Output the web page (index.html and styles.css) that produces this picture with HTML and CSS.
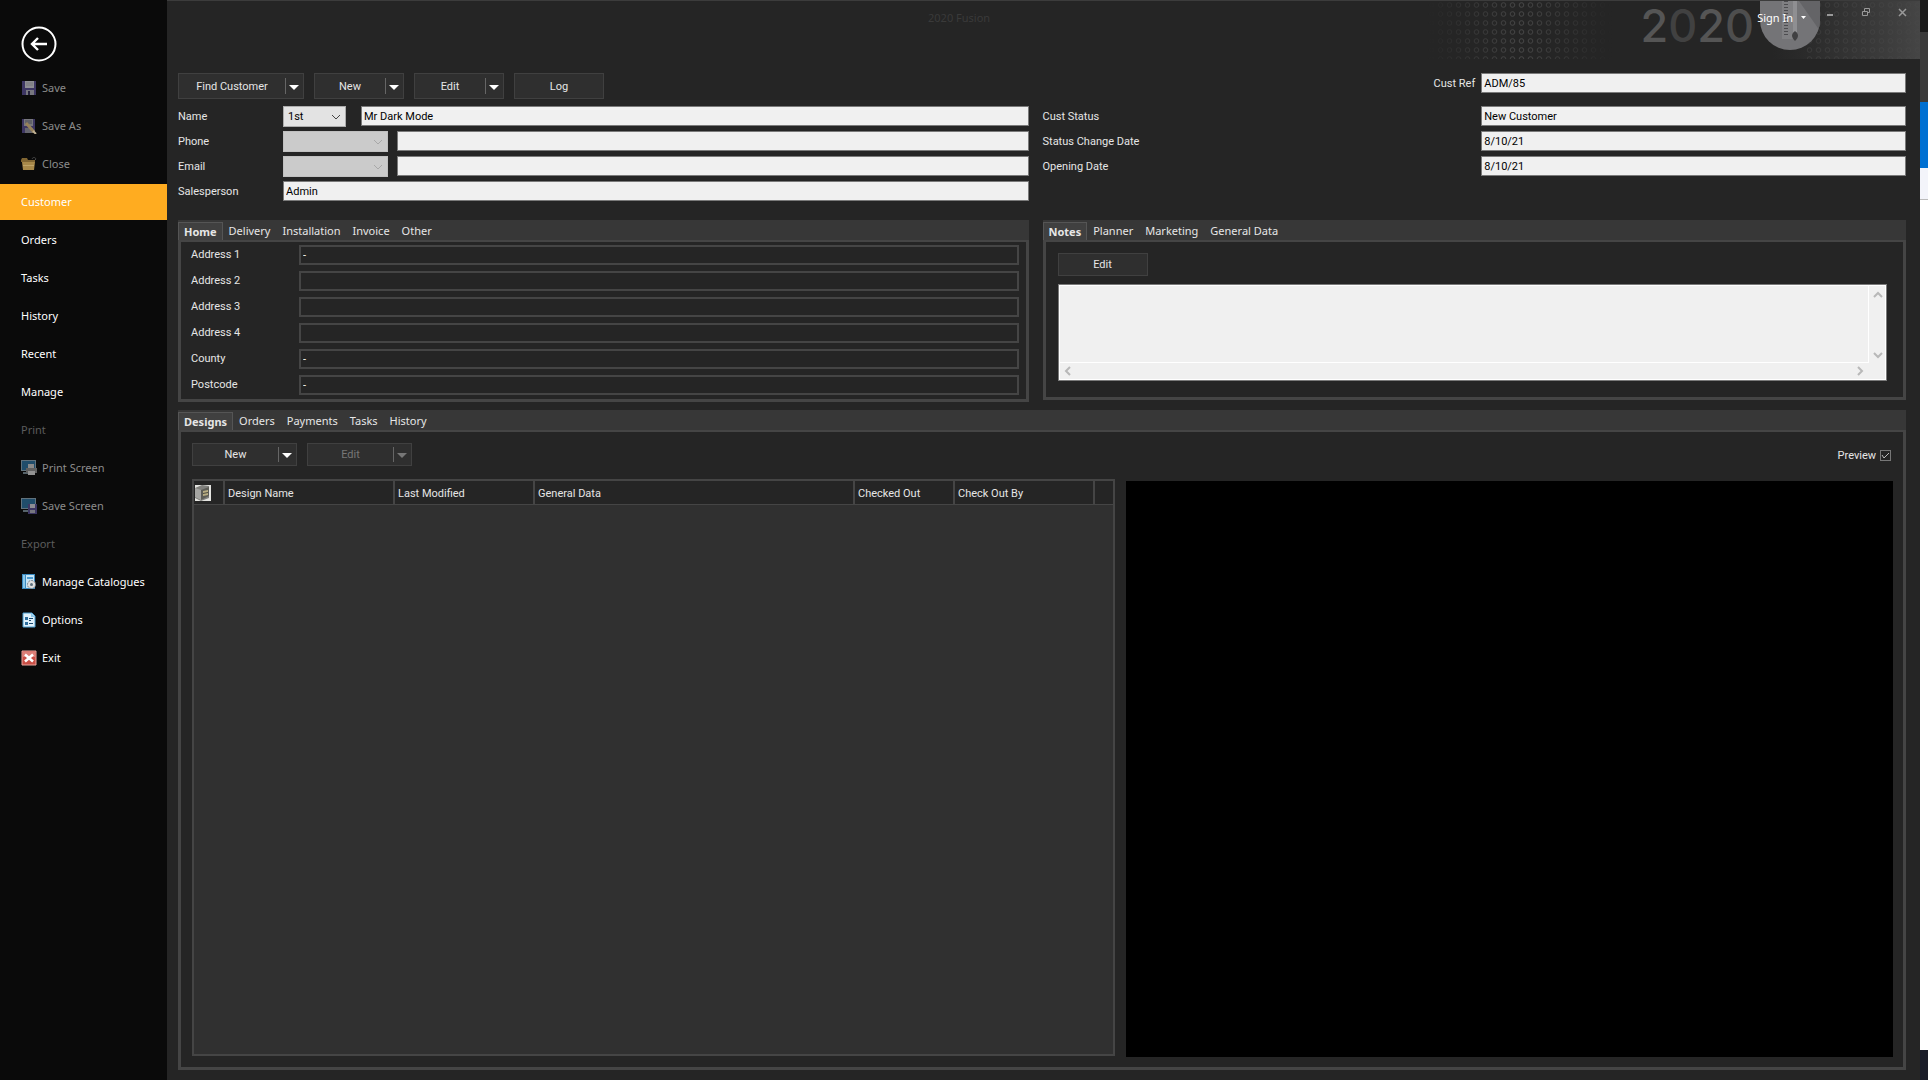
FILE: index.html
```html
<!DOCTYPE html>
<html lang="en">
<head>
  <meta charset="utf-8">
  <title>2020 Fusion</title>
  <link rel="stylesheet" href="styles.css">
</head>
<body>

<div id="window">

  <nav id="sidebar">
    <button class="back" aria-label="Back">
      <svg width="36" height="36" viewBox="0 0 36 36" fill="none" stroke="#fff" stroke-width="2">
        <circle cx="18" cy="18" r="16.5"/>
        <path d="M26 18H11M17 12l-6 6 6 6" stroke-width="2.4"/>
      </svg>
    </button>
    <ul class="menu">
      <li><a href="#" class="disabled">
        <svg class="icon" viewBox="0 0 16 16"><path d="M1 1h14v14H1z" fill="#3d3663"/><path d="M4 1h9v7H4z" fill="#8d8d93"/><path d="M5 3h7M5 5h7" stroke="#77777d"/><path d="M5 10h8v5H5z" fill="#77777f"/><path d="M7 11h2v4H7z" fill="#26223d"/></svg>
        Save</a></li>
      <li><a href="#" class="disabled">
        <svg class="icon" viewBox="0 0 16 16"><path d="M1 1h13v14H1z" fill="#3d3663"/><path d="M3 1h9v7H3z" fill="#77777d"/><path d="M4 3h7M4 5h7" stroke="#4c4c55"/><path d="M4 10h8v5H4z" fill="#66666f"/><path d="M5 5l8 9" stroke="#96815a" stroke-width="3"/><path d="M12 13l3 3" stroke="#c0b090" stroke-width="2"/></svg>
        Save As</a></li>
      <li><a href="#" class="disabled">
        <svg class="icon" viewBox="0 0 16 16"><path d="M0 4l1-2h5l1 2h7v2H0z" fill="#806532"/><path d="M1 6h13l-1 8H2z" fill="#a8894a"/><path d="M2 9h11v1H2z" fill="#c0a468"/><path d="M11 3c1-2 3-2 4 0l-1 1" stroke="#4a4a4a" fill="none"/></svg>
        Close</a></li>
      <li><a href="#" class="active">Customer</a></li>
      <li><a href="#">Orders</a></li>
      <li><a href="#">Tasks</a></li>
      <li><a href="#">History</a></li>
      <li><a href="#">Recent</a></li>
      <li><a href="#">Manage</a></li>
      <li><span class="heading">Print</span></li>
      <li><a href="#" class="disabled">
        <svg class="icon" viewBox="0 0 16 16"><path d="M0 0h15v11H0z" fill="#61727d"/><path d="M1 1h13v9H1z" fill="#204d6b"/><path d="M2 12h5v2H2z" fill="#56636a"/><path d="M7 4h6v4H7z" fill="#8a8a8a"/><path d="M5 8h11v5H5z" fill="#606060"/><path d="M7 11h7v4H7z" fill="#929292"/></svg>
        Print Screen</a></li>
      <li><a href="#" class="disabled">
        <svg class="icon" viewBox="0 0 16 16"><path d="M0 0h15v11H0z" fill="#61727d"/><path d="M1 1h13v9H1z" fill="#204d6b"/><path d="M2 12h5v2H2z" fill="#56636a"/><path d="M7 6h9v10H7z" fill="#3d3663"/><path d="M9 6h5v4H9z" fill="#8d8d93"/><path d="M9 12h5v3H9z" fill="#77777f"/></svg>
        Save Screen</a></li>
      <li><span class="heading">Export</span></li>
      <li><a href="#">
        <svg class="icon" viewBox="0 0 16 16"><path d="M1 0h13v15H1z" fill="#3a8ac0"/><path d="M2 1h2v13H2z" fill="#8cc8ea"/><path d="M5 1h8v13H5z" fill="#c6e4f5"/><path d="M6 3h6v2H6z" fill="#4c9bd0"/><circle cx="10.5" cy="10.5" r="4" fill="#dedede" stroke="#707a82" stroke-dasharray="2 1"/><circle cx="10.5" cy="10.5" r="1.5" fill="#5c6f7c"/></svg>
        Manage Catalogues</a></li>
      <li><a href="#">
        <svg class="icon" viewBox="0 0 16 16"><path d="M2 1h9l3 3v11H2z" fill="#dff1fb" stroke="#4c9fd2"/><path d="M10 1v4h4" fill="#8cc8ea"/><path d="M4 5h3v3H4zM4 10h3v3H4z" fill="#2c6d9d"/><path d="M8 6.5h4M8 8.500h2M8 11.500h4" stroke="#17486e"/></svg>
        Options</a></li>
      <li><a href="#">
        <svg class="icon" viewBox="0 0 16 16"><path d="M1 1h14v14H1z" fill="#c94f46" stroke="#e9a59d"/><path d="M2 2h12v5H2z" fill="#dc8078"/><path d="M4 4.5l8 7M12 4.5l-8 7" stroke="#fff" stroke-width="2.6"/></svg>
        Exit</a></li>
    </ul>
  </nav>

  <div id="main">

    <div id="titlebar">
      <svg class="art" width="493" height="58" viewBox="0 0 493 58">
        <defs>
          <pattern id="rings" width="9" height="9" patternUnits="userSpaceOnUse"><circle cx="4.5" cy="4" r="2.3" fill="none" stroke="#484848"/></pattern>
          <linearGradient id="fadeLeft"><stop offset="0" stop-color="#fff" stop-opacity="0"/><stop offset=".5" stop-color="#fff"/><stop offset="1" stop-color="#fff" stop-opacity="0"/></linearGradient>
          <linearGradient id="shine"><stop offset="0" stop-color="#3c3c3c" stop-opacity="0"/><stop offset="1" stop-color="#454545"/></linearGradient>
          <mask id="m1"><path d="M0 0h185v58H0z" fill="url(#fadeLeft)"/></mask>
          <clipPath id="disc"><path d="M333 0h60v19a30 30 0 0 1-60 0z"/></clipPath>
        </defs>
        <path d="M345 0h148v58H345z" fill="url(#shine)"/>
        <path d="M0 0h185v58H0z" fill="url(#rings)" mask="url(#m1)"/>
        <path d="M380 0h113v58H380z" fill="url(#rings)" opacity=".5"/>
        <g clip-path="url(#disc)">
          <path d="M333 0h60v50h-60z" fill="#747477"/>
          <path d="M372 0h21v30z" fill="#646467"/>
          <path d="M355 0h14v38h-14z" fill="#808083"/>
          <path d="M359 0v34" stroke="#4d4d50" stroke-width="4" stroke-dasharray="1 2"/>
          <path d="M366 0h4v31h-4z" fill="#8f8f92"/>
          <path d="M368 40c-4-4-4-7 0-10 4 3 4 6 0 10z" fill="#404042"/>
        </g>
      </svg>
      <div class="logo"><span class="c1">2</span><span class="c2">0</span><span class="c1">2</span><span class="c3">0</span></div>
      <div class="title">2020 Fusion</div>
      <button class="signin">Sign In <svg width="6" height="4" viewBox="0 0 6 4"><path d="M0 0h5L2.5 3z" fill="#fff"/></svg></button>
      <div class="controls">
        <button aria-label="Minimize"><svg width="12" height="12" viewBox="0 0 12 12" stroke="#999" fill="none"><path d="M3 8h6" stroke-width="2"/></svg></button>
        <button aria-label="Restore"><svg width="12" height="12" viewBox="0 0 12 12" stroke="#999" fill="none"><path d="M2.5 4.500h5v4h-5zM4.500 4V1.500h5v4H8"/></svg></button>
        <button aria-label="Close"><svg width="12" height="12" viewBox="0 0 12 12" stroke="#999" fill="none"><path d="M3 2l7 7M10 2l-7 7" stroke-width="1.5"/></svg></button>
      </div>
    </div>

    <div id="customer">
      <div class="toolbar">
        <div class="split wide"><button>Find Customer</button><button class="drop" aria-label="Find Customer options"></button></div>
        <div class="split"><button>New</button><button class="drop" aria-label="New options"></button></div>
        <div class="split"><button>Edit</button><button class="drop" aria-label="Edit options"></button></div>
        <button class="plain">Log</button>
      </div>

      <div class="status-form">
        <label class="right" for="cust-ref">Cust Ref</label>
        <input type="text" id="cust-ref" value="ADM/85">
      </div>

      <div class="contact-form">
        <label for="name">Name</label>
        <div class="fields">
          <select class="title-select" aria-label="Name order"><option>1st</option></select>
          <input type="text" id="name" value="Mr Dark Mode">
        </div>
        <label for="phone">Phone</label>
        <div class="fields">
          <select aria-label="Phone type" disabled><option></option></select>
          <input type="text" id="phone">
        </div>
        <label for="email">Email</label>
        <div class="fields">
          <select aria-label="Email type" disabled><option></option></select>
          <input type="text" id="email">
        </div>
        <label for="salesperson">Salesperson</label>
        <div class="fields"><input type="text" id="salesperson" value="Admin"></div>
      </div>

      <div class="status-form">
        <label for="status">Cust Status</label>
        <input type="text" id="status" value="New Customer">
        <label for="status-date">Status Change Date</label>
        <input type="text" id="status-date" value="8/10/21">
        <label for="open-date">Opening Date</label>
        <input type="text" id="open-date" value="8/10/21">
      </div>

      <div class="panel">
        <div class="tabs">
          <button class="selected">Home</button><button>Delivery</button><button>Installation</button><button>Invoice</button><button>Other</button>
        </div>
        <div class="panel-body address">
          <label for="address1">Address 1</label><input type="text" id="address1" value="-">
          <label for="address2">Address 2</label><input type="text" id="address2">
          <label for="address3">Address 3</label><input type="text" id="address3">
          <label for="address4">Address 4</label><input type="text" id="address4">
          <label for="county">County</label><input type="text" id="county" value="-">
          <label for="postcode">Postcode</label><input type="text" id="postcode" value="-">
        </div>
      </div>

      <div class="panel">
        <div class="tabs">
          <button class="selected">Notes</button><button>Planner</button><button>Marketing</button><button>General Data</button>
        </div>
        <div class="panel-body notes">
          <button class="plain">Edit</button>
          <div class="notes-box">
            <textarea aria-label="Notes"></textarea>
            <div class="vscroll">
              <svg width="10" height="8" viewBox="0 0 10 8"><path d="M1 6l4-4 4 4"/></svg>
              <svg width="10" height="8" viewBox="0 0 10 8"><path d="M1 2l4 4 4-4"/></svg>
            </div>
            <div class="hscroll">
              <svg width="8" height="10" viewBox="0 0 8 10"><path d="M6 1L2 5l4 4"/></svg>
              <svg width="8" height="10" viewBox="0 0 8 10"><path d="M2 1l4 4-4 4"/></svg>
            </div>
          </div>
        </div>
      </div>
    </div>

    <div id="designs" class="panel">
      <div class="tabs">
        <button class="selected">Designs</button><button>Orders</button><button>Payments</button><button>Tasks</button><button>History</button>
      </div>
      <div class="panel-body">
        <div class="design-bar">
          <div class="split"><button>New</button><button class="drop" aria-label="New options"></button></div>
          <div class="split"><button disabled>Edit</button><button class="drop" aria-label="Edit options" disabled></button></div>
          <label class="preview-toggle">Preview <input type="checkbox" checked></label>
        </div>
        <div class="design-area">
          <div class="list">
            <table>
              <colgroup><col class="c-icon"><col class="c-name"><col class="c-date"><col><col class="c-out"><col class="c-by"><col class="c-end"></colgroup>
              <thead>
                <tr>
                  <th><svg width="16" height="16" viewBox="0 0 16 16"><path d="M0 0h16v16H0z" fill="#e4e4e0"/><path d="M0 3l7-3 7 1v12l-8 3-6-3z" fill="#80807d"/><path d="M0 3l6 2v10l-6-3z" fill="#a5a5a2"/><path d="M6 5l8-3v9l-8 4z" fill="#5c5c56"/><path d="M8 6l5-1v5l-5 1z" fill="#b8ad82"/><path d="M8 8.5l5-1" stroke="#4c4b40"/></svg></th>
                  <th>Design Name</th>
                  <th>Last Modified</th>
                  <th>General Data</th>
                  <th>Checked Out</th>
                  <th>Check Out By</th>
                  <th></th>
                </tr>
              </thead>
            </table>
          </div>
          <div class="preview"></div>
        </div>
      </div>
    </div>

  </div>
</div>

<div id="desktop">
  <div class="bar-dark"></div>
  <div class="bar-grey"></div>
  <div class="bar-blue"></div>
  <div class="bar-pale"></div>
  <div class="bar-white"></div>
  <div class="taskbar"></div>
</div>

</body>
</html>
```
FILE: styles.css
```css
* {
  box-sizing: border-box;
}
body {
  margin: 0;
  height: 100vh;
  display: flex;
  background: #252525;
  color: #e6e6e6;
  font-family: Roboto, "Liberation Sans", sans-serif;
  font-size: 11px;
  line-height: 14px;
}
button, input, select, textarea {
  margin: 0;
  font: inherit;
  color: inherit;
  border-radius: 0;
}
button {
  background: none;
  border: 0;
  padding: 0;
}
#window {
  flex: 1;
  min-width: 0;
  display: flex;
}

/* sidebar */
#sidebar {
  width: 167px;
  flex: none;
  background: #0a0a0a;
  padding-top: 26px;
}
.back {
  display: block;
  margin-left: 21px;
  height: 36px;
}
.back svg {
  display: block;
}
.menu {
  list-style: none;
  margin: 8px 0 0;
  padding: 0;
  font-family: "Noto Sans", sans-serif;
}
.menu li {
  margin-bottom: 2px;
}
.menu a, .menu .heading {
  display: flex;
  align-items: center;
  gap: 5px;
  height: 36px;
  padding-left: 21px;
  color: #fff;
  text-decoration: none;
}
.menu .disabled {
  color: #8c8c8c;
}
.menu .heading {
  color: #5c5c5c;
}
.menu .active {
  background: #ffac20;
}
.icon {
  width: 16px;
  height: 16px;
}

/* title bar */
#main {
  flex: 1;
  min-width: 0;
  display: flex;
  flex-direction: column;
  padding: 0 14px 10px 11px;
}
#titlebar {
  position: relative;
  display: flex;
  height: 59px;
  margin: 0 -14px 14px -11px;
  border-top: 1px solid #3c3c3c;
  font-family: "Noto Sans", sans-serif;
}
.art {
  position: absolute;
  top: 0;
  right: 0;
}
.logo {
  position: absolute;
  top: 0;
  right: 166px;
  font: 500 45px/50px Inter, sans-serif;
}
.c1 { color: #555; }
.c2 { color: #414141; }
.c3 { color: #4e4e4e; }
.title {
  flex: 1;
  padding: 10px 6px 0 0;
  text-align: center;
  color: #3a3a3a;
}
.signin, .controls {
  position: relative;
}
.signin {
  display: flex;
  align-items: center;
  gap: 8px;
  height: 34px;
  margin-right: 17px;
  color: #fff;
}
.controls {
  display: flex;
  gap: 24px;
  height: 24px;
  margin-right: 12px;
}
.controls svg {
  display: block;
}

/* customer */
#customer {
  display: grid;
  grid-template-columns: 851fr 864fr;
  column-gap: 14px;
  align-items: start;
}
.toolbar, .design-bar {
  display: flex;
  gap: 10px;
}
.split {
  display: flex;
  width: 90px;
  height: 26px;
  background: #2f2f2f;
  border: 1px solid #404040;
}
.split.wide {
  width: 126px;
}
.split button:first-child {
  flex: 1;
  padding-top: 1px;
}
.split .drop {
  width: 18px;
  margin: 4px 0;
  border-left: 1px solid #666;
}
.drop::before {
  content: "";
  display: block;
  margin: 2px 0 0 3px;
  width: 0;
  border: 5px solid transparent;
  border-top-color: #fff;
  border-bottom: 0;
}
.split button:disabled {
  color: #777;
}
.drop:disabled::before {
  border-top-color: #777;
}
.plain {
  width: 90px;
  height: 26px;
  padding-top: 1px;
  background: #2f2f2f;
  border: 1px solid #404040;
}

.contact-form, .status-form {
  display: grid;
  align-items: center;
}
.contact-form {
  grid-template-columns: 105px 1fr;
  row-gap: 4px;
  margin: 7px 0 18px;
}
.status-form {
  grid-template-columns: 439fr 425fr;
  row-gap: 5px;
}
.contact-form + .status-form {
  margin-top: 7px;
}
.status-form .right {
  text-align: right;
  padding-right: 6px;
}
.contact-form label, .status-form label {
  padding-top: 1px;
}
.fields {
  display: flex;
  gap: 9px;
  height: 21px;
}
input[type=text] {
  width: 100%;
  min-width: 0;
  height: 20px;
  padding: 0 2px;
  background: #f0f0f0;
  border: 1px solid #7a7a7a;
  color: #000;
}
select {
  flex: none;
  width: 105px;
  height: 21px;
  padding: 0 4px;
  appearance: none;
  color: #000;
  background: #e3e3e3 url("data:image/svg+xml,%3Csvg xmlns='http://www.w3.org/2000/svg' width='10' height='6' fill='none' stroke='%23444'%3E%3Cpath d='M1 1l4 4 4-4'/%3E%3C/svg%3E") no-repeat right 4px center;
  border: 1px solid #acacac;
}
select:disabled {
  opacity: 1;
  background-color: #cbcbcb;
  background-image: url("data:image/svg+xml,%3Csvg xmlns='http://www.w3.org/2000/svg' width='10' height='6' fill='none' stroke='%23a8a8a8'%3E%3Cpath d='M1 1l4 4 4-4'/%3E%3C/svg%3E");
  border-color: #c0c0c0;
}
.title-select {
  width: 63px;
  margin-right: 6px;
}

/* tabbed panels */
.panel {
  background: #252525;
}
.tabs {
  display: flex;
  height: 22px;
  background: #373737;
  border-bottom: 2px solid #454545;
  font-family: "Noto Sans", sans-serif;
}
.tabs button {
  padding: 2px 6px 0;
  height: 20px;
}
.tabs .selected {
  height: 18px;
  margin-top: 2px;
  padding: 0 5px;
  background: #404040;
  border: 1px solid #555;
  border-bottom: 0;
  font-weight: bold;
}
.panel-body {
  border: 3px solid #454545;
  border-top: 0;
}
.address {
  display: grid;
  grid-template-columns: 108px 1fr;
  gap: 6px 0;
  align-items: center;
  padding: 3px 7px 4px 10px;
}
.address input[type=text] {
  background: #252525;
  border: 2px solid #454545;
  color: #fff;
}
.notes {
  padding: 11px 16px 16px 12px;
}
.notes .plain {
  display: block;
  height: 23px;
  margin-bottom: 8px;
}
.notes-box {
  display: grid;
  grid-template-columns: 1fr 17px;
  grid-template-rows: 1fr 17px;
  height: 97px;
  background: #f0f0f0;
  border: 1px solid #7a7a7a;
  outline: 1px solid #fff;
  outline-offset: -2px;
}
.notes-box textarea {
  background: none;
  border: 1px solid #fff;
  resize: none;
  overflow: hidden;
  color: #000;
}
.vscroll, .hscroll {
  display: flex;
  justify-content: space-between;
  align-items: center;
  fill: none;
  stroke: #b8b8b8;
  stroke-width: 2;
}
.vscroll {
  flex-direction: column;
  padding: 6px 0 4px;
}
.hscroll {
  padding: 0 5px 2px;
}

/* designs */
#designs {
  flex: 1;
  display: flex;
  flex-direction: column;
  margin-top: 8px;
}
#designs .panel-body {
  flex: 1;
  display: flex;
  flex-direction: column;
  padding: 11px 10px 11px 11px;
}
.design-bar .split {
  width: 105px;
  height: 23px;
}
.design-bar .drop {
  margin: 3px 0;
}
.preview-toggle {
  display: flex;
  align-items: center;
  gap: 4px;
  margin-left: auto;
  padding: 2px 2px 0 0;
}
.preview-toggle input {
  appearance: none;
  width: 11px;
  height: 11px;
  margin: 0;
  border: 1px solid #777;
  background: url("data:image/svg+xml,%3Csvg xmlns='http://www.w3.org/2000/svg' width='9' height='9' fill='none' stroke='%23bbb'%3E%3Cpath d='M1 4l2 3 5-5'/%3E%3C/svg%3E") no-repeat center;
}
.design-area {
  flex: 1;
  display: grid;
  grid-template-columns: 923fr 767fr;
  column-gap: 11px;
  margin-top: 13px;
}
.list {
  background: #303030;
  border: 2px solid #454545;
}
.list table {
  width: 100%;
  table-layout: fixed;
  border-collapse: separate;
  border-spacing: 0;
}
.list th {
  height: 24px;
  padding: 2px 3px 0;
  background: #252525;
  border-right: 2px solid #454545;
  border-bottom: 1px solid #454545;
  font-weight: normal;
  text-align: left;
}
.list th:first-child {
  padding: 1px 1px 0;
}
.list th:last-child {
  border-right: 0;
}
.list th svg {
  display: block;
}
.c-icon { width: 31px; }
.c-name { width: 170px; }
.c-date { width: 140px; }
.c-out { width: 100px; }
.c-by { width: 140px; }
.c-end { width: 18px; }
.preview {
  background: #000;
  margin: 2px 0 -1px;
}

/* sliver of the desktop behind the window */
#desktop {
  width: 8px;
  display: flex;
  flex-direction: column;
}
.bar-dark { height: 32px; background: #1b1b1b; }
.bar-grey { height: 70px; background: #3b3b3b; }
.bar-blue { height: 66px; background: #0070d2; }
.bar-pale { height: 32px; background: #f3f4fa; border-bottom: 1px solid #bbb; }
.bar-white { flex: 1; background: #fff; }
.taskbar { height: 30px; background: #1a1d28; }
```
